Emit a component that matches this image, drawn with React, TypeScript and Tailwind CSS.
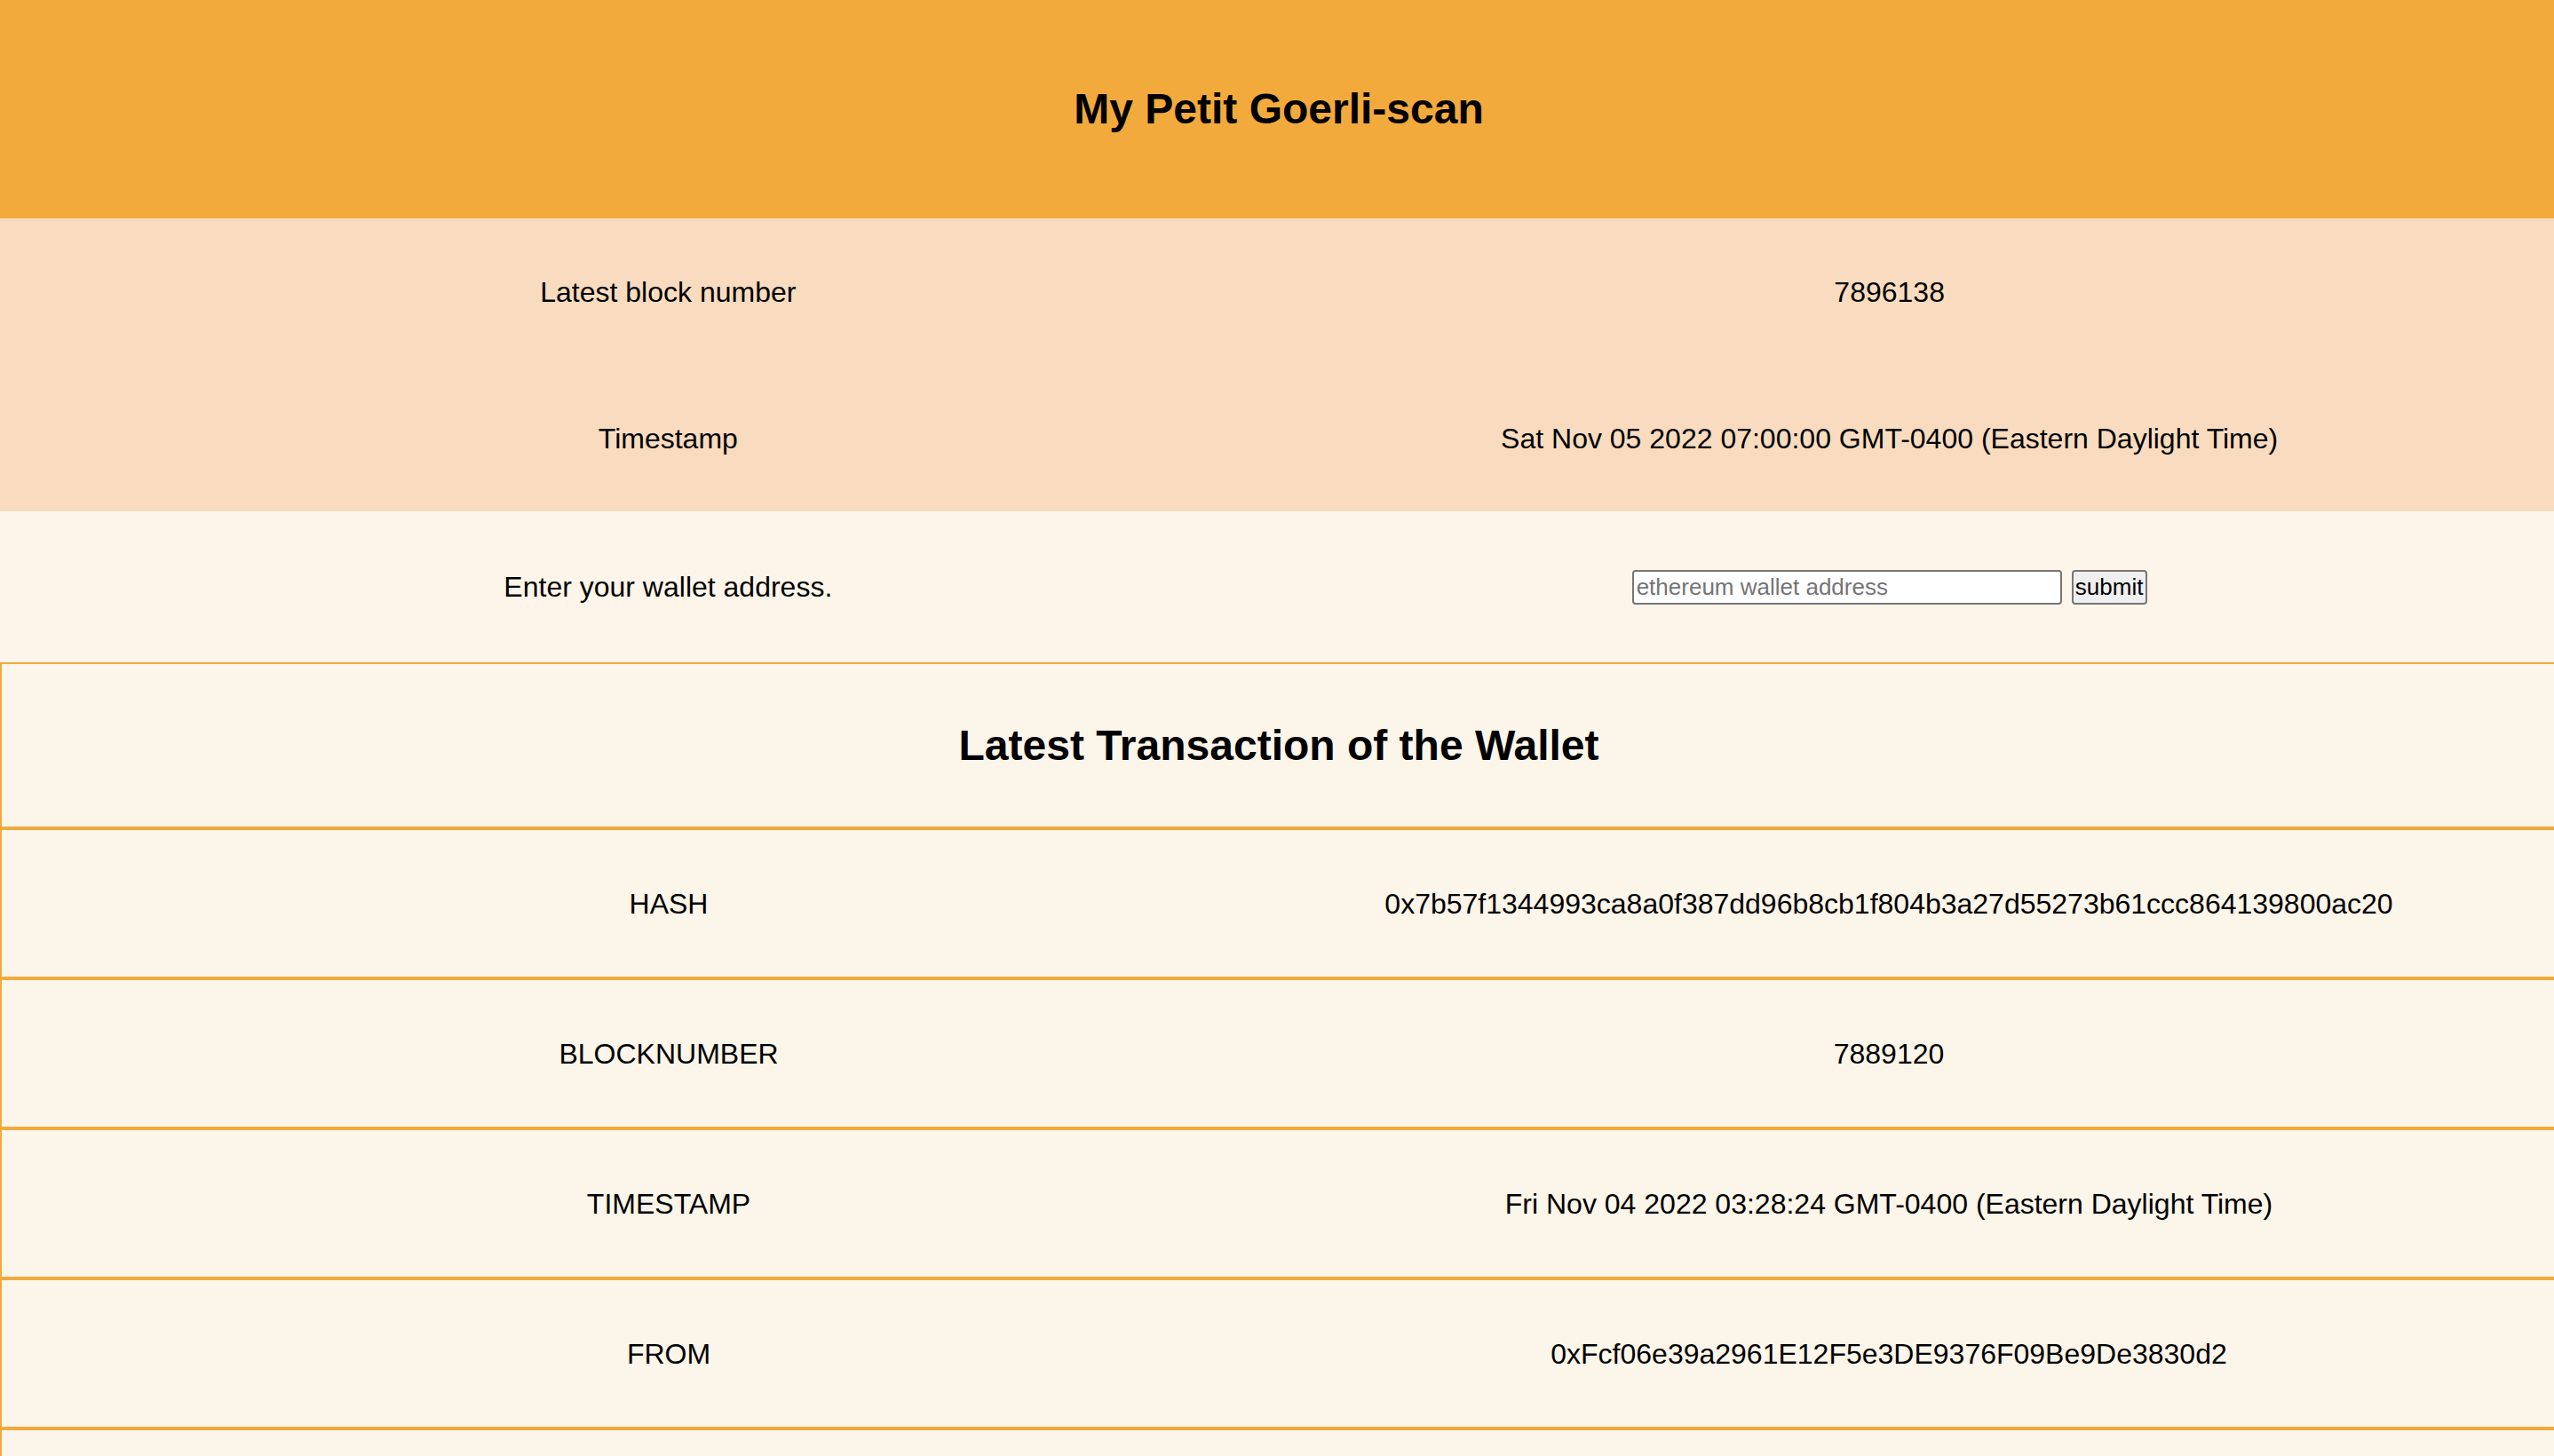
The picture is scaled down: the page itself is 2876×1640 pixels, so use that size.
import { useState } from 'react';

const block = {
  number: '7896138',
  timestamp: 'Sat Nov 05 2022 07:00:00 GMT-0400 (Eastern Daylight Time)',
};

const latestTx = [
  { label: 'HASH', value: '0x7b57f1344993ca8a0f387dd96b8cb1f804b3a27d55273b61ccc864139800ac20' },
  { label: 'BLOCKNUMBER', value: '7889120' },
  { label: 'TIMESTAMP', value: 'Fri Nov 04 2022 03:28:24 GMT-0400 (Eastern Daylight Time)' },
  { label: 'FROM', value: '0xFcf06e39a2961E12F5e3DE9376F09Be9De3830d2' },
];

// two fixed-width cells spread with space-evenly, like the original page
const Cells = ({ left, right }: { left: React.ReactNode; right: React.ReactNode }) => (
  <>
    <div className="w-[1246px] text-center">{left}</div>
    <div className="w-[1246px] text-center">{right}</div>
  </>
);

const App = () => {
  const [address, setAddress] = useState('');

  return (
    <div className="h-[1640px] w-full overflow-hidden">
      <div className="w-[2880px] font-['Liberation_Sans',Arial,Helvetica,sans-serif] text-[32px] leading-normal text-black">
        {/* Header */}
        <header className="flex h-[246px] items-center justify-center bg-[#F2AA3C]">
          <h1 className="text-[48px] font-bold">My Petit Goerli-scan</h1>
        </header>

        {/* Latest block */}
        <section className="bg-[#F9DCBF]">
          <div className="flex h-[165px] items-center justify-evenly">
            <Cells left="Latest block number" right={block.number} />
          </div>
          <div className="flex h-[165px] items-center justify-evenly">
            <Cells left="Timestamp" right={block.timestamp} />
          </div>
        </section>

        {/* Wallet input */}
        <section className="flex h-[170px] items-center justify-evenly bg-[#FDF5E9]">
          <Cells
            left="Enter your wallet address."
            right={
              <form
                className="flex items-center justify-center"
                onSubmit={(e) => e.preventDefault()}
              >
                <input
                  type="text"
                  value={address}
                  onChange={(e) => setAddress(e.target.value)}
                  placeholder="ethereum wallet address"
                  className="h-[39px] w-[484px] rounded-[4px] border-2 border-[#767676] bg-white px-[3px] text-[26px] leading-none placeholder:text-[#757575] focus:outline-none"
                />
                <button
                  type="submit"
                  className="ml-[11px] h-[39px] w-[85px] rounded-[4px] border-2 border-[#767676] bg-[#EFEFEF] px-0 text-[26px] leading-none"
                >
                  submit
                </button>
              </form>
            }
          />
        </section>

        {/* Latest transaction */}
        <section className="bg-[#FCF5E9]">
          <div className="box-content flex h-[183px] w-[2876px] items-center justify-center border-2 border-[#F2AA3C]">
            <h2 className="text-[48px] font-bold">Latest Transaction of the Wallet</h2>
          </div>
          {latestTx.map((row) => (
            <div
              key={row.label}
              className="box-content flex h-[165px] w-[2876px] items-center justify-evenly border-2 border-[#F2AA3C]"
            >
              <Cells left={row.label} right={row.value} />
            </div>
          ))}
          {/* next row starts at the bottom edge of the window */}
          <div className="box-content h-[165px] w-[2876px] border-2 border-[#F2AA3C]" />
        </section>
      </div>
    </div>
  );
};

export default App;
